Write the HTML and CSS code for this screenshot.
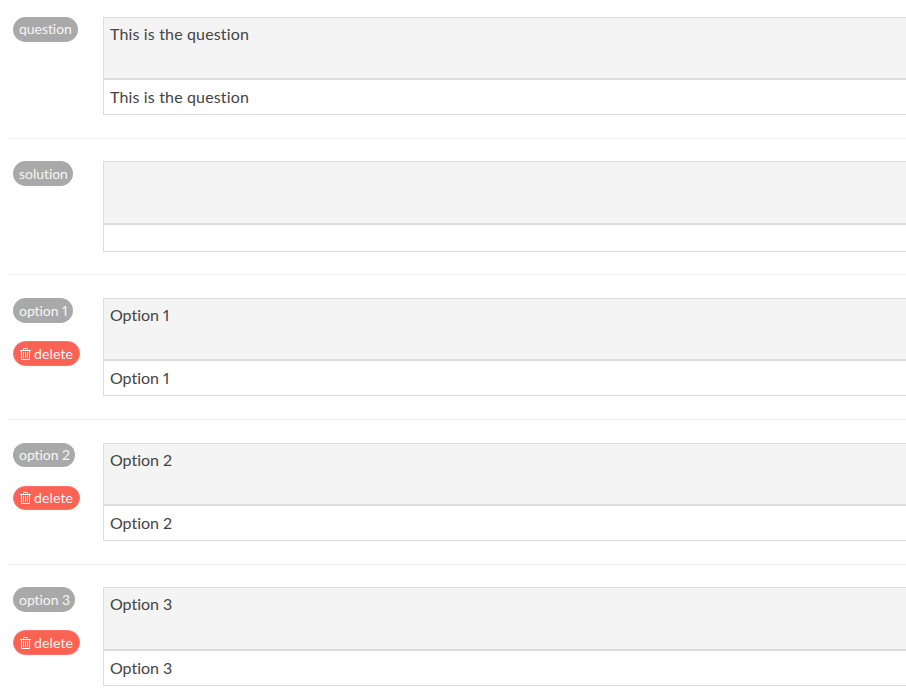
FILE: index.html
```
<!DOCTYPE html>
<html lang="en">
<head>
  <meta charset="UTF-8">
  <meta name="viewport" content="width=device-width, initial-scale=1.0">
  <title>Edit Question</title>
  <link rel="stylesheet" href="styles.css">
</head>
<body>
  <!-- Trash icon shared by the delete buttons -->
  <svg class="sprite" width="0" height="0">
    <symbol id="trash" viewBox="0 0 11 12">
      <path d="M0 2.5h11M3.5 2.5v-1.2q0-.8.8-.8h2.4q.8 0 .8.8v1.2M1.5 2.5v9h8v-9M3.5 4v6M5.5 4v6M7.5 4v6" />
    </symbol>
  </svg>

  <div class="form">
    <div class="row">
      <div class="side">
        <span class="tag tag-question">question</span>
      </div>
      <div class="field">
        <div class="editor" contenteditable="true" spellcheck="false">This is the question</div>
        <div class="preview">This is the question</div>
      </div>
    </div>
    <hr>
    <div class="row">
      <div class="side">
        <span class="tag tag-solution">solution</span>
      </div>
      <div class="field">
        <div class="editor" contenteditable="true" spellcheck="false"></div>
        <div class="preview empty"></div>
      </div>
    </div>
    <hr>
    <div class="row">
      <div class="side">
        <span class="tag tag-first">option 1</span>
        <button class="delete"><svg class="icon"><use href="#trash" /></svg>delete</button>
      </div>
      <div class="field option">
        <div class="editor" contenteditable="true" spellcheck="false">Option 1</div>
        <div class="preview">Option 1</div>
      </div>
    </div>
    <hr>
    <div class="row">
      <div class="side">
        <span class="tag">option 2</span>
        <button class="delete"><svg class="icon"><use href="#trash" /></svg>delete</button>
      </div>
      <div class="field option">
        <div class="editor" contenteditable="true" spellcheck="false">Option 2</div>
        <div class="preview">Option 2</div>
      </div>
    </div>
    <hr>
    <div class="row">
      <div class="side">
        <span class="tag">option 3</span>
        <button class="delete"><svg class="icon"><use href="#trash" /></svg>delete</button>
      </div>
      <div class="field option">
        <div class="editor" contenteditable="true" spellcheck="false">Option 3</div>
        <div class="preview">Option 3</div>
      </div>
    </div>
  </div>
</body>
</html>
```
FILE: styles.css
```
* {
  box-sizing: border-box;
}

body {
  margin: 0;
  font-family: Lato, sans-serif;
  font-size: 16px;
  font-variant-ligatures: none;
  font-variant-numeric: proportional-nums;
  color: #444;
  background: white;
  overflow: hidden;
}

.sprite {
  display: none;
}

.form {
  padding: 16.8px 0 0 8px;
}

.row {
  display: flex;
}

.side {
  display: flex;
  flex-direction: column;
  align-items: flex-start;
  gap: 18.1px;
  width: 95px;
  padding-left: 5px;
}

.tag, .delete {
  display: flex;
  align-items: center;
  width: 62px;
  height: 24.9px;
  padding: 0 0 0 6px;
  border: none;
  border-radius: 13px;
  font-family: inherit;
  font-size: 14px;
  line-height: 24px;
  letter-spacing: -0.05px;
  white-space: nowrap;
  color: #f6f6f6;
  background: #a9a9a9;
}

.tag-question {
  width: 65px;
}

.tag-solution, .tag-first {
  width: 60px;
}

.tag-first {
  padding-top: 1px;
}

.delete {
  width: 67px;
  height: 24.8px;
  padding-top: 1px;
  border: 1px solid #ff7265;
  letter-spacing: 0.15px;
  background: #fa6353;
  cursor: pointer;
}

.icon {
  width: 11px;
  height: 12px;
  margin-right: 3px;
  fill: none;
  stroke: white;
}

.field {
  flex: 1;
}

.editor, .preview {
  padding: 6px;
  border: 1px solid #ddd;
  border-right: none;
  line-height: 22px;
  letter-spacing: 0.15px;
}

.option .editor, .option .preview {
  letter-spacing: -0.03px;
}

.editor {
  height: 62.4px;
  padding-top: 5.2px;
  background: #f4f4f4;
  outline: none;
}

.preview {
  height: 36px;
}

.preview.empty {
  height: 28px;
}

hr {
  height: 1px;
  margin: 22.6px 0;
  border: none;
  background: #eee;
}
```
